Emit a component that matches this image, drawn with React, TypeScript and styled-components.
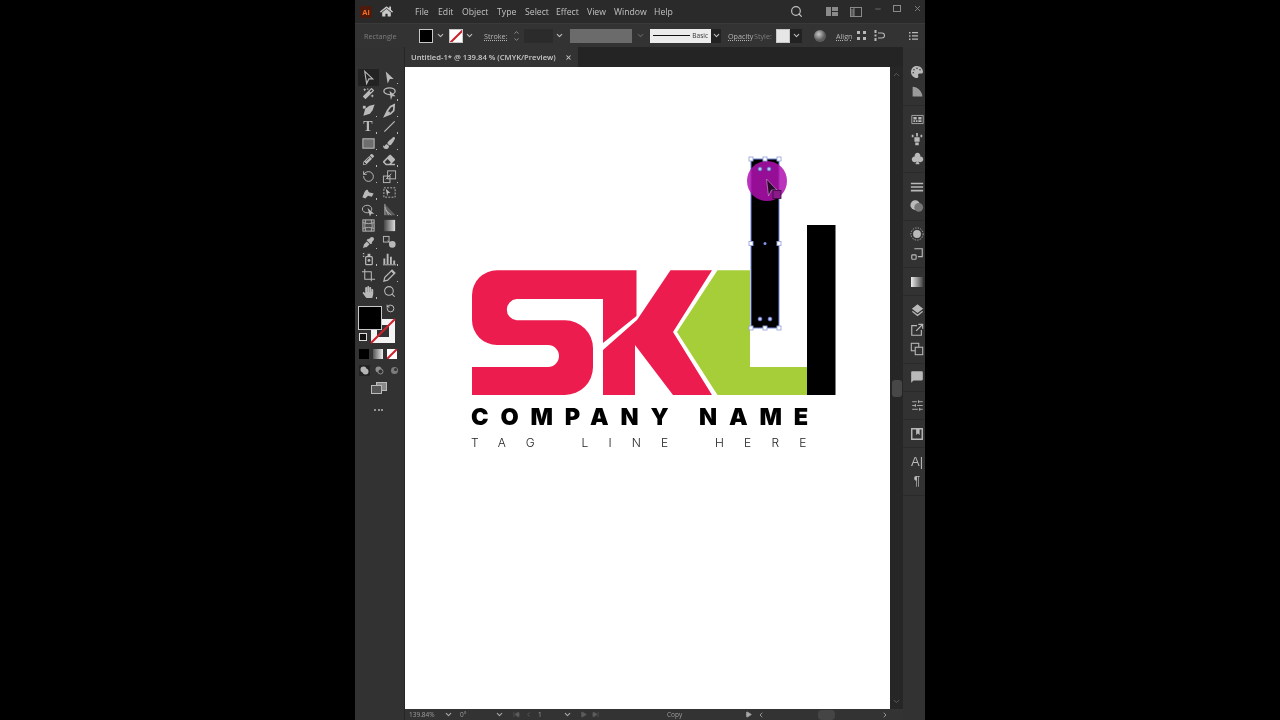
import React, { ReactNode } from 'react';
import styled, { createGlobalStyle } from 'styled-components';
import { ChevronDown, ChevronLeft, ChevronRight, ChevronUp, Minus, Play, RotateCcw, Search, SkipBack, SkipForward, SlidersHorizontal, X } from 'lucide-react';
import { FaEraser, FaEyeDropper, FaHandPaper, FaHome, FaMagic, FaPaintBrush, FaPalette, FaPencilAlt } from 'react-icons/fa';
import { BsSuitClubFill } from 'react-icons/bs';
import { MdChatBubble, MdLayers } from 'react-icons/md';

const uiFont = `"Open Sans", "Liberation Sans", sans-serif`;
const iconColor = '#b9b9b9';

const GlobalStyle = createGlobalStyle`
  html, body {
    margin: 0;
    height: 100%;
    background: #000;
    overflow: hidden;
  }
`;

const Page = styled.div`
  width: 1280px;
  height: 720px;
  background: #000;
  display: flex;
  justify-content: center;
`;

const Win = styled.div`
  width: 570px;
  height: 720px;
  display: flex;
  flex-direction: column;
  font-family: ${uiFont};
  background: #323232;
  filter: blur(0.4px);
`;

const MenuBar = styled.div`
  height: 23px;
  background: #2a2a2a;
  display: flex;
  align-items: center;
  color: #c2c2c2;
  font-size: 8.7px;
  flex: none;
`;

const AppMark = styled.div`
  width: 12px;
  height: 12px;
  margin-left: 5px;
  background: #4d1a0c;
  color: #f0702a;
  font-size: 7.5px;
  font-weight: 700;
  line-height: 12px;
  text-align: center;
  border-radius: 1px;
`;

const HomeButton = styled.div`
  display: flex;
  margin-left: 8px;
  margin-right: 22px;
  color: #c9c9c9;
`;

const MenuItem = styled.span<{ $w: number }>`
  width: ${(p) => p.$w}px;
  flex: none;
`;

const MenuRight = styled.div`
  display: flex;
  align-items: center;
  margin-left: auto;
  color: #c0c0c0;
`;

const LayoutIcon = styled.svg`
  display: block;
`;

const WinButton = styled.div<{ $ml: number; $up?: boolean; $last?: boolean }>`
  display: flex;
  margin-left: ${(p) => p.$ml}px;
  margin-right: ${(p) => (p.$last ? 3 : 0)}px;
  margin-bottom: ${(p) => (p.$up ? 6 : 0)}px;
  color: #8a8a8a;
`;

const ControlBar = styled.div`
  height: 24px;
  background: #333;
  display: flex;
  align-items: center;
  color: #a8a8a8;
  font-size: 7.2px;
  flex: none;
  border-top: 1px solid #3a3a3a;
  box-sizing: border-box;
`;

const ControlLabel = styled.span<{ $ml: number; $w: number; $link?: boolean; $dim?: boolean }>`
  margin-left: ${(p) => p.$ml}px;
  width: ${(p) => p.$w}px;
  flex: none;
  white-space: nowrap;
  color: ${(p) => (p.$dim ? '#7e7e7e' : '#b4b4b4')};
  text-decoration: ${(p) => (p.$link ? 'underline dotted' : 'none')};
`;

const Swatch = styled.div<{ $ml: number; $bg: string }>`
  width: 14px;
  height: 14px;
  margin-left: ${(p) => p.$ml}px;
  box-sizing: border-box;
  background: ${(p) => p.$bg};
  border: 1px solid #c8c8c8;
  position: relative;
  overflow: hidden;
  flex: none;
`;

const Slash = styled.div`
  position: absolute;
  left: -3px;
  top: 5px;
  width: 20px;
  height: 2px;
  background: #c8202c;
  transform: rotate(-45deg);
`;

const Caret = styled.div<{ $ml?: number; $box?: boolean; $w?: number; $faint?: boolean }>`
  display: flex;
  align-items: center;
  justify-content: center;
  flex: none;
  height: 14px;
  width: ${(p) => p.$w ?? 10}px;
  margin-left: ${(p) => p.$ml ?? 0}px;
  background: ${(p) => (p.$box ? '#222' : 'transparent')};
  color: #bdbdbd;
  opacity: ${(p) => (p.$faint ? 0.3 : 1)};
`;

const SpinBox = styled.div<{ $ml: number }>`
  margin-left: ${(p) => p.$ml}px;
  display: flex;
  flex-direction: column;
  align-items: center;
  color: #a8a8a8;
  flex: none;
  width: 10px;
`;

const Field = styled.div<{ $ml: number; $w: number; $bg: string }>`
  margin-left: ${(p) => p.$ml}px;
  width: ${(p) => p.$w}px;
  height: 14px;
  flex: none;
  background: ${(p) => p.$bg};
`;

const Profile = styled.div`
  margin-left: 5px;
  width: 61px;
  height: 14px;
  flex: none;
  box-sizing: border-box;
  padding: 0 3px;
  background: #ececec;
  color: #333;
  display: flex;
  align-items: center;
  justify-content: space-between;
  font-size: 6.5px;
`;

const ProfileLine = styled.div`
  width: 37px;
  height: 1.6px;
  background: #111;
`;

const IconSlot = styled.div<{ $ml: number }>`
  margin-left: ${(p) => p.$ml}px;
  display: flex;
  flex: none;
  color: ${iconColor};
`;

const Main = styled.div`
  flex: 1;
  min-height: 0;
  display: flex;
`;

const ToolBar = styled.div`
  width: 50px;
  flex: none;
  box-sizing: border-box;
  padding: 22px 0 0 2.5px;
  background: #323232;
  border-right: 1px solid #262626;
  display: flex;
  flex-direction: column;
`;

const ToolGrid = styled.div`
  display: grid;
  grid-template-columns: 21px 21px;
  grid-auto-rows: 16.5px;
`;

const Tool = styled.div<{ $active?: boolean; $more?: boolean }>`
  position: relative;
  display: flex;
  align-items: center;
  justify-content: center;
  color: ${iconColor};
  background: ${(p) => (p.$active ? '#232323' : 'transparent')};
  font-family: "Liberation Serif", serif;
  font-weight: 700;
  font-size: 14px;

  &::after {
    content: '';
    display: ${(p) => (p.$more ? 'block' : 'none')};
    position: absolute;
    right: 1.5px;
    bottom: 1.5px;
    width: 1.5px;
    height: 1.5px;
    background: #bbb;
  }
`;

const FillStroke = styled.div`
  position: relative;
  height: 37px;
  margin-top: 6px;
`;

const FillBox = styled.div`
  position: absolute;
  left: 0.5px;
  top: 0;
  width: 24px;
  height: 24px;
  box-sizing: border-box;
  background: #000;
  border: 1px solid #c9c9c9;
  z-index: 3;
`;

const StrokeBox = styled.div`
  position: absolute;
  left: 13.5px;
  top: 13px;
  width: 24px;
  height: 24px;
  box-sizing: border-box;
  background: #333;
  border: 6px solid #f4f4f4;
  z-index: 1;
`;

const StrokeSlash = styled.div`
  position: absolute;
  left: 8.5px;
  top: 24px;
  width: 34px;
  height: 2px;
  background: #d0202e;
  transform: rotate(-45deg);
  z-index: 2;
`;

const SwapArrow = styled.div`
  position: absolute;
  left: 28px;
  top: -2px;
  color: #c8c8c8;
  display: flex;
`;

const DefaultColors = styled.div`
  position: absolute;
  left: 1px;
  top: 27px;
  width: 8px;
  height: 8px;
  box-sizing: border-box;
  background: #111;
  border: 1px solid #ddd;
  z-index: 3;
`;

const ModeRow = styled.div<{ $mt: number }>`
  display: flex;
  gap: 4px;
  margin-top: ${(p) => p.$mt}px;
  padding-left: 1.5px;
`;

const Mode = styled.div<{ $bg: string }>`
  width: 10px;
  height: 10px;
  position: relative;
  overflow: hidden;
  background: ${(p) => p.$bg};
`;

const ModeSlash = styled.div`
  position: absolute;
  left: -2px;
  top: 4px;
  width: 14px;
  height: 2px;
  background: #d0202e;
  transform: rotate(-45deg);
`;

const DrawMode = styled.div<{ $active?: boolean }>`
  width: 11px;
  height: 11px;
  display: flex;
  align-items: center;
  justify-content: center;
  background: ${(p) => (p.$active ? '#242424' : 'transparent')};
`;

const CenteredIcon = styled.div<{ $mt: number }>`
  display: flex;
  justify-content: center;
  width: 42px;
  margin-top: ${(p) => p.$mt}px;
  color: ${iconColor};
`;

const MoreDots = styled.div`
  width: 42px;
  margin-top: 15px;
  display: flex;
  justify-content: center;
  gap: 1.5px;
`;

const Dot = styled.i`
  width: 2px;
  height: 2px;
  border-radius: 50%;
  background: #b5b5b5;
`;

const DocArea = styled.div`
  flex: 1;
  min-width: 0;
  display: flex;
  flex-direction: column;
`;

const TabBar = styled.div`
  height: 20px;
  flex: none;
  background: #242424;
  display: flex;
`;

const Tab = styled.div`
  width: 173px;
  box-sizing: border-box;
  padding: 0 6px;
  background: #333;
  color: #c8c8c8;
  font-size: 7.65px;
  font-weight: 600;
  display: flex;
  align-items: center;
  justify-content: space-between;
`;

const CanvasRow = styled.div`
  flex: 1;
  min-height: 0;
  display: flex;
`;

const Canvas = styled.div`
  width: 485px;
  flex: none;
  box-sizing: border-box;
  padding: 88px 0 0 66px;
  background: #fff;
  color: #000;
`;

const Artwork = styled.svg`
  display: block;
`;

const CompanyName = styled.div`
  margin-top: 7.5px;
  font-family: Inter, "Liberation Sans", sans-serif;
  font-weight: 900;
  font-size: 23.5px;
  line-height: 24px;
  letter-spacing: 11.85px;
  word-spacing: 2px;
  white-space: nowrap;
`;

const TagLine = styled.div`
  margin-top: 7px;
  font-family: Inter, "Liberation Sans", sans-serif;
  font-weight: 300;
  font-size: 12px;
  line-height: 14px;
  letter-spacing: 20.2px;
  word-spacing: 3px;
  white-space: nowrap;
  color: #222;
`;

const VScroll = styled.div`
  flex: 1;
  background: #262626;
  display: flex;
  flex-direction: column;
  align-items: center;
  color: #5e5e5e;
  padding: 3px 0;
`;

const VThumb = styled.div`
  width: 10px;
  height: 17px;
  margin-top: 301px;
  border-radius: 3px;
  background: #474747;
`;

const ScrollEnd = styled.div`
  margin-top: auto;
  display: flex;
`;

const StatusBar = styled.div`
  height: 11px;
  flex: none;
  background: #333;
  color: #9e9e9e;
  font-size: 6.5px;
  display: flex;
  align-items: center;
`;

const StatusText = styled.span<{ $ml: number; $w: number }>`
  margin-left: ${(p) => p.$ml}px;
  width: ${(p) => p.$w}px;
  flex: none;
  white-space: nowrap;
`;

const StatusIcon = styled.div<{ $ml: number; $dim?: boolean }>`
  margin-left: ${(p) => p.$ml}px;
  flex: none;
  display: flex;
  color: ${(p) => (p.$dim ? '#5c5c5c' : '#a8a8a8')};
`;

const HThumb = styled.div`
  width: 17px;
  height: 10px;
  margin-left: 53px;
  border-radius: 4px;
  background: #454545;
  flex: none;
`;

const Panel = styled.div`
  width: 22px;
  flex: none;
  box-sizing: border-box;
  padding-top: 11px;
  background: #323232;
  display: flex;
  flex-direction: column;
`;

const PanelGroup = styled.div`
  box-sizing: border-box;
  padding: 4px 0 3.7px 6px;
  border-bottom: 1px solid #2a2a2a;
  display: grid;
  grid-auto-rows: 19.5px;
  place-items: center;
  color: ${iconColor};
  flex: none;
`;

const PanelGlyph = styled.span<{ $size: number }>`
  font-family: "Liberation Sans", sans-serif;
  font-size: ${(p) => p.$size}px;
  line-height: 1;
  font-weight: 400;
  color: ${iconColor};
`;

type IconProps = { children: ReactNode; size?: number };

function Ico({ children, size = 15 }: IconProps) {
  return (
    <svg width={size} height={size} viewBox="0 0 16 16" fill="currentColor" stroke="none">
      {children}
    </svg>
  );
}

const toolList: { icon: ReactNode; active?: boolean; more?: boolean }[] = [
  { active: true, icon: <Ico><path d="M4 1.5 12.5 9.5H8.4L6 14.5Z" fill="none" stroke="currentColor" strokeWidth="1.2" /></Ico> },
  { more: true, icon: <Ico><path d="M4 1.5 12.5 9.5H8.4L6 14.5Z" /></Ico> },
  { icon: <FaMagic size={11} /> },
  { more: true, icon: <Ico><ellipse cx="8" cy="5.5" rx="6" ry="3.6" fill="none" stroke="currentColor" strokeWidth="1.4" /><path d="M8 5 14.5 11H11L9.5 15Z" /></Ico> },
  { more: true, icon: <Ico><path d="M14.5 1.5 9 3 4.5 6 2.5 13.5 9.5 11.5 12.5 7.5Z" /><path d="M2 3h3v3H2z" /></Ico> },
  { more: true, icon: <Ico><path d="M13 2 9 4 6 8 3 14l6-2.5L12.5 8ZM8 9.5l-3 3" fill="none" stroke="currentColor" strokeWidth="1.8" /></Ico> },
  { more: true, icon: <span>T</span> },
  { more: true, icon: <Ico><path d="M2.5 13.5 13.5 2.5" stroke="currentColor" strokeWidth="1.3" /></Ico> },
  { more: true, icon: <Ico><rect x="2" y="3" width="12" height="10" fill="#6e6e6e" stroke="currentColor" strokeWidth="1.1" /></Ico> },
  { more: true, icon: <FaPaintBrush size={12} /> },
  { more: true, icon: <FaPencilAlt size={11} /> },
  { more: true, icon: <FaEraser size={12} /> },
  { more: true, icon: <RotateCcw size={13} strokeWidth={1.8} /> },
  { more: true, icon: <Ico><rect x="1.5" y="7.5" width="7" height="7" fill="none" stroke="currentColor" /><rect x="6" y="2" width="8.5" height="8.5" fill="none" stroke="currentColor" /><path d="M4 11l6-6" stroke="currentColor" /></Ico> },
  { more: true, icon: <Ico><path d="M1.5 13c2-4 2.5-8 5-8 1.500 0 1 3 3 3l4 1-2 3.500-4-1-3 3Z" /></Ico> },
  { icon: <Ico><path d="M2 3h12v10H2Z" fill="none" stroke="currentColor" strokeDasharray="2 1.4" /><path d="M4 4 9 8.500H6.500L5.500 12Z" /></Ico> },
  { more: true, icon: <Ico><ellipse cx="6.500" cy="7.500" rx="5" ry="4" fill="none" stroke="currentColor" /><path d="M7 6.500 14 12.500H11L9.500 15.500Z" /></Ico> },
  { more: true, icon: <Ico><path d="M3 2 14.500 14H3Z" fill="#5e5e5e" /><path d="M3 2v12M3 8l7 6M3 5l4 9" stroke="currentColor" strokeWidth=".8" fill="none" /></Ico> },
  { icon: <Ico><rect x="2" y="2" width="12" height="12" fill="#4a4a4a" stroke="currentColor" /><path d="M5 2 4 8l1 6M11 2l1 6-1 6M2 5l6 1 6-1M2 11l6-1 6 1" stroke="currentColor" fill="none" strokeWidth=".9" /></Ico> },
  { icon: <Ico><defs><linearGradient id="toolGrad"><stop offset="0" stopColor="#444" /><stop offset="1" stopColor="#ddd" /></linearGradient></defs><rect x="2" y="2" width="12" height="12" fill="url(#toolGrad)" /></Ico> },
  { more: true, icon: <FaEyeDropper size={11} /> },
  { icon: <Ico><rect x="1.500" y="1.500" width="6" height="6" fill="none" stroke="currentColor" /><circle cx="11" cy="10" r="3.500" /><path d="M6 6l3 3" stroke="currentColor" /></Ico> },
  { more: true, icon: <Ico><rect x="5" y="6" width="7" height="8.500" rx="1" fill="none" stroke="currentColor" strokeWidth="1.300" /><path d="M7 3h3v3H7zM2 2h1.500v1.500H2zM2 5h1.500v1.500H2z" /><circle cx="8.500" cy="10" r="1.500" /></Ico> },
  { more: true, icon: <Ico><path d="M2.500 8v6M6 3v11M9.500 6v8M13 10v4" stroke="currentColor" strokeWidth="2" /><path d="M1 14.700h14" stroke="currentColor" /></Ico> },
  { icon: <Ico><path d="M4 1v11h11" fill="none" stroke="currentColor" strokeWidth="1.100" /><path d="M1 4h10v10" fill="none" stroke="currentColor" strokeWidth="1.100" /></Ico> },
  { more: true, icon: <Ico><path d="M2 14 3 10 10 3l3 3-7 7Z" fill="none" stroke="currentColor" strokeWidth="1.300" /><path d="M10 2l4 4" stroke="currentColor" strokeWidth="2" /></Ico> },
  { more: true, icon: <FaHandPaper size={12} /> },
  { icon: <Search size={13} strokeWidth={1.9} /> },
];

function LayoutGlyph() {
  return (
    <LayoutIcon width="12" height="9" viewBox="0 0 12 9" fill="currentColor">
      <path d="M0 0h5v9H0zM6 0h6v4H6zM6 5h6v4H6z" />
    </LayoutIcon>
  );
}

function PanelGlyphIcon() {
  return (
    <LayoutIcon width="12" height="10" viewBox="0 0 12 10" fill="none" stroke="currentColor">
      <rect x=".5" y=".5" width="11" height="9" />
      <path d="M4 .5v9" />
      <path d="M1 2h3v7H1z" fill="currentColor" stroke="none" opacity=".5" />
    </LayoutIcon>
  );
}

function Handle({ x, y }: { x: number; y: number }) {
  return <rect x={x - 2} y={y - 2} width="4" height="4" fill="#fff" stroke="#9aa7e0" strokeWidth=".9" />;
}

function LiveDot({ x, y }: { x: number; y: number }) {
  return <circle cx={x} cy={y} r="2" fill="#b9c4f2" stroke="#4b5bb0" strokeWidth=".7" />;
}

function LogoArt() {
  return (
    <Artwork width="370" height="242" viewBox="471 155 370 242">
      <path
        fill="#ed1c4e"
        d="M497 270.300H636.500V316L603 343V299H516.500A10.700 10.700 0 0 0 516.500 320.300H565A28 28 0 0 1 593 348.300V367A28 28 0 0 1 565 395H472V367H548A11 11 0 0 0 548 345H497A25 25 0 0 1 472 320V295.300A25 25 0 0 1 497 270.300Z"
      />
      <path
        fill="#ed1c4e"
        d="M603 350 637 320 670.500 270.300H712L673 332 712 395H673L635 345V395H603Z"
      />
      <path fill="#a6ce39" d="M717.500 270.300H750V367H807V395H717.500L677 332Z" />
      <rect x="807" y="225" width="28.500" height="170" fill="#000" />
      <rect x="751" y="159" width="28" height="169" fill="#000" stroke="#6f86d8" strokeWidth="1" />
      <circle cx="767" cy="181" r="20" fill="#b010b0" opacity=".85" />
      <LiveDot x={760} y={169} />
      <LiveDot x={769} y={169} />
      <LiveDot x={760} y={319} />
      <LiveDot x={770} y={319} />
      <circle cx="765" cy="243.500" r="1.500" fill="#7f92e6" />
      <Handle x={751} y={159} />
      <Handle x={765} y={159} />
      <Handle x={779} y={159} />
      <Handle x={751} y={243.500} />
      <Handle x={779} y={243.500} />
      <Handle x={751} y={328} />
      <Handle x={765} y={328} />
      <Handle x={779} y={328} />
      <path d="M766.500 179 777 190H771.500L768.500 196Z" fill="#2a0a2a" stroke="#d9a0d9" strokeWidth=".6" />
      <rect x="773" y="190.500" width="8" height="8" fill="#8a1a8a" stroke="#3a0a3a" strokeWidth=".8" />
    </Artwork>
  );
}

export default function App() {
  const menus: [string, number][] = [
    ['File', 23], ['Edit', 24], ['Object', 35], ['Type', 28], ['Select', 31],
    ['Effect', 31], ['View', 27], ['Window', 40], ['Help', 30],
  ];
  const small = <ChevronDown size={9} strokeWidth={3} />;

  return (
    <Page>
      <GlobalStyle />
      <Win>
        <MenuBar>
          <AppMark>Ai</AppMark>
          <HomeButton><FaHome size={13} /></HomeButton>
          {menus.map(([label, w]) => (
            <MenuItem key={label} $w={w}>{label}</MenuItem>
          ))}
          <MenuRight>
            <Search size={13} strokeWidth={2.2} />
            <WinButton $ml={23}><LayoutGlyph /></WinButton>
            <WinButton $ml={12}><PanelGlyphIcon /></WinButton>
            <WinButton $ml={12} $up><Minus size={8} strokeWidth={2} /></WinButton>
            <WinButton $ml={11} $up><LayoutIcon width="8" height="7" viewBox="0 0 8 7" fill="none" stroke="currentColor"><rect x=".5" y=".5" width="7" height="6" /></LayoutIcon></WinButton>
            <WinButton $ml={12} $up $last><X size={9} strokeWidth={2.2} /></WinButton>
          </MenuRight>
        </MenuBar>

        <ControlBar>
          <ControlLabel $ml={9} $w={55} $dim>Rectangle</ControlLabel>
          <Swatch $ml={0} $bg="#000" />
          <Caret $ml={2}>{small}</Caret>
          <Swatch $ml={4} $bg="#fff"><Slash /></Swatch>
          <Caret $ml={1}>{small}</Caret>
          <ControlLabel $ml={10} $w={24} $link>Stroke:</ControlLabel>
          <SpinBox $ml={3}><ChevronUp size={7} strokeWidth={2.5} /><ChevronDown size={7} strokeWidth={2.5} /></SpinBox>
          <Field $ml={3} $w={29} $bg="#2b2b2b" />
          <Caret $ml={1}>{small}</Caret>
          <Field $ml={6} $w={62} $bg="#6b6b6b" />
          <Caret $ml={3} $faint>{small}</Caret>
          <Profile><ProfileLine />Basic</Profile>
          <Caret $box>{small}</Caret>
          <ControlLabel $ml={7} $w={26} $link>Opacity</ControlLabel>
          <ControlLabel $ml={0} $w={22} $dim>Style:</ControlLabel>
          <Swatch $ml={0} $bg="#e6e6e6" />
          <Caret $box $w={12}>{small}</Caret>
          <IconSlot $ml={12}>
            <LayoutIcon width="12" height="12" viewBox="0 0 12 12">
              <defs><radialGradient id="globe" cx=".4" cy=".35"><stop offset="0" stopColor="#c8c8c8" /><stop offset="1" stopColor="#5c5c5c" /></radialGradient></defs>
              <circle cx="6" cy="6" r="6" fill="url(#globe)" />
            </LayoutIcon>
          </IconSlot>
          <ControlLabel $ml={10} $w={19} $link>Align</ControlLabel>
          <IconSlot $ml={2}>
            <LayoutIcon width="9" height="9" viewBox="0 0 9 9" fill="currentColor"><path d="M0 0h3v3H0zM6 0h3v3H6zM0 6h3v3H0zM6 6h3v3H6z" /></LayoutIcon>
          </IconSlot>
          <IconSlot $ml={8}>
            <LayoutIcon width="11" height="11" viewBox="0 0 11 11" fill="none" stroke="currentColor"><path d="M1.500 0v3M1.500 4.500v2M1.500 8v3" strokeWidth="2" /><path d="M4 3h4a2.500 2.500 0 0 1 0 5H4" strokeWidth="1.100" /></LayoutIcon>
          </IconSlot>
          <IconSlot $ml={24}>
            <LayoutIcon width="9" height="8" viewBox="0 0 9 8" fill="currentColor"><path d="M0 0h1.500v1.500H0zM3 0h6v1.200H3zM0 3.200h1.500v1.500H0zM3 3.300h6v1.200H3zM0 6.500h1.500V8H0zM3 6.600h6v1.200H3z" /></LayoutIcon>
          </IconSlot>
        </ControlBar>

        <Main>
          <ToolBar>
            <ToolGrid>
              {toolList.map((t, i) => (
                <Tool key={i} $active={t.active} $more={t.more}>{t.icon}</Tool>
              ))}
            </ToolGrid>
            <FillStroke>
              <FillBox />
              <StrokeBox />
              <StrokeSlash />
              <SwapArrow><RotateCcw size={9} strokeWidth={2.4} /></SwapArrow>
              <DefaultColors />
            </FillStroke>
            <ModeRow $mt={6}>
              <Mode $bg="#000" />
              <Mode $bg="linear-gradient(90deg, #555, #eee)" />
              <Mode $bg="#fff"><ModeSlash /></Mode>
            </ModeRow>
            <ModeRow $mt={6}>
              <DrawMode $active><LayoutIcon width="9" height="9" viewBox="0 0 9 9" fill="#b5b5b5"><circle cx="3.500" cy="3.500" r="3" /><circle cx="5.500" cy="5.500" r="3" /></LayoutIcon></DrawMode>
              <DrawMode><LayoutIcon width="9" height="9" viewBox="0 0 9 9" fill="#8e8e8e"><circle cx="3.500" cy="3.500" r="3" /><circle cx="5.500" cy="5.500" r="2.500" fill="#333" stroke="#8e8e8e" /></LayoutIcon></DrawMode>
              <DrawMode><LayoutIcon width="9" height="9" viewBox="0 0 9 9" fill="#7c7c7c"><circle cx="4.500" cy="4.500" r="3.500" /><circle cx="5.500" cy="3.500" r="1.500" fill="#333" /></LayoutIcon></DrawMode>
            </ModeRow>
            <CenteredIcon $mt={6}>
              <LayoutIcon width="16" height="12" viewBox="0 0 16 12"><rect x="5.500" y=".5" width="10" height="8" fill="#8a8a8a" stroke="#bbb" /><rect x=".5" y="3.500" width="10" height="8" fill="#555" stroke="#bbb" /></LayoutIcon>
            </CenteredIcon>
            <MoreDots><Dot /><Dot /><Dot /></MoreDots>
          </ToolBar>

          <DocArea>
            <TabBar>
              <Tab>
                <span>Untitled-1* @ 139.84 % (CMYK/Preview)</span>
                <X size={7} strokeWidth={3.5} />
              </Tab>
            </TabBar>
            <CanvasRow>
              <Canvas>
                <LogoArt />
                <CompanyName>COMPANY NAME</CompanyName>
                <TagLine>TAG LINE HERE</TagLine>
              </Canvas>
              <VScroll>
                <ChevronUp size={9} strokeWidth={2.5} />
                <VThumb />
                <ScrollEnd><ChevronDown size={9} strokeWidth={2.5} /></ScrollEnd>
              </VScroll>
            </CanvasRow>
            <StatusBar>
              <StatusText $ml={4} $w={35}>139.84%</StatusText>
              <StatusIcon $ml={0}>{small}</StatusIcon>
              <StatusText $ml={7} $w={35}>0°</StatusText>
              <StatusIcon $ml={0}>{small}</StatusIcon>
              <StatusIcon $ml={9} $dim><SkipBack size={7} fill="currentColor" /></StatusIcon>
              <StatusIcon $ml={5} $dim><ChevronLeft size={7} strokeWidth={3} /></StatusIcon>
              <StatusText $ml={6} $w={25}>1</StatusText>
              <StatusIcon $ml={0}>{small}</StatusIcon>
              <StatusIcon $ml={8} $dim><Play size={7} fill="currentColor" /></StatusIcon>
              <StatusIcon $ml={5} $dim><SkipForward size={7} fill="currentColor" /></StatusIcon>
              <StatusText $ml={68} $w={78}>Copy</StatusText>
              <StatusIcon $ml={0}><Play size={7} fill="currentColor" /></StatusIcon>
              <StatusIcon $ml={5}><ChevronLeft size={8} strokeWidth={2.5} /></StatusIcon>
              <HThumb />
              <StatusIcon $ml={46}><ChevronRight size={8} strokeWidth={2.5} /></StatusIcon>
            </StatusBar>
          </DocArea>

          <Panel>
            <PanelGroup>
              <FaPalette size={12} />
              <Ico size={13}><path d="M2 2c6 0 12 6 12 12H2Z" fill="#9a9a9a" /></Ico>
            </PanelGroup>
            <PanelGroup>
              <Ico size={13}><path d="M1 3h14v10H1Z" fill="none" stroke="currentColor" /><path d="M3 5h4v3H3zM9 5h4v3H9zM3 9h2v2H3zM6 9h2v2H6zM9 9h4v2H9z" /></Ico>
              <Ico size={14}><path d="M5 6h6v5H5zM6 12h4v3H6zM7 1h2v4H7zM2 3h2v3H2zM12 3h2v3h-2z" /></Ico>
              <BsSuitClubFill size={13} />
            </PanelGroup>
            <PanelGroup>
              <Ico size={14}><path d="M1 3h14v1.800H1zM1 7.100h14v1.800H1zM1 11.200h14V13H1z" /></Ico>
              <Ico size={14}><circle cx="6" cy="7" r="5.500" /><circle cx="10" cy="9.500" r="5" fill="#777" /></Ico>
            </PanelGroup>
            <PanelGroup>
              <Ico size={14}><circle cx="8" cy="8" r="4.500" /><circle cx="8" cy="8" r="7" fill="none" stroke="currentColor" strokeDasharray="1.500 1.500" /></Ico>
              <Ico size={14}><path d="M5 2h9v9H9" fill="none" stroke="currentColor" strokeWidth="1.300" /><rect x="2" y="9" width="5" height="5" rx="1" fill="none" stroke="currentColor" strokeWidth="1.300" /></Ico>
            </PanelGroup>
            <PanelGroup>
              <LayoutIcon width="12" height="10" viewBox="0 0 12 10">
                <defs><linearGradient id="panelGrad"><stop offset="0" stopColor="#eee" /><stop offset="1" stopColor="#444" /></linearGradient></defs>
                <rect width="12" height="10" fill="url(#panelGrad)" />
              </LayoutIcon>
            </PanelGroup>
            <PanelGroup>
              <MdLayers size={15} />
              <Ico size={14}><path d="M8 3H2v11h11V8" fill="none" stroke="currentColor" strokeWidth="1.300" /><path d="M7 9l7-7M9.500 1.500H14.500V6.500" fill="none" stroke="currentColor" strokeWidth="1.300" /></Ico>
              <Ico size={14}><rect x="1.500" y="1.500" width="8.500" height="8.500" fill="none" stroke="currentColor" strokeWidth="1.200" /><rect x="6" y="6" width="8.500" height="8.500" fill="#323232" stroke="currentColor" strokeWidth="1.200" /></Ico>
            </PanelGroup>
            <PanelGroup><MdChatBubble size={14} /></PanelGroup>
            <PanelGroup><SlidersHorizontal size={13} strokeWidth={1.6} /></PanelGroup>
            <PanelGroup>
              <Ico size={14}><path d="M2 2h12v12H2Z" fill="none" stroke="currentColor" strokeWidth="1.600" /><path d="M7 2h4v7L9 7.500 7 9Z" /></Ico>
            </PanelGroup>
            <PanelGroup>
              <PanelGlyph $size={13}>A|</PanelGlyph>
              <PanelGlyph $size={12}>¶</PanelGlyph>
            </PanelGroup>
          </Panel>
        </Main>
      </Win>
    </Page>
  );
}
